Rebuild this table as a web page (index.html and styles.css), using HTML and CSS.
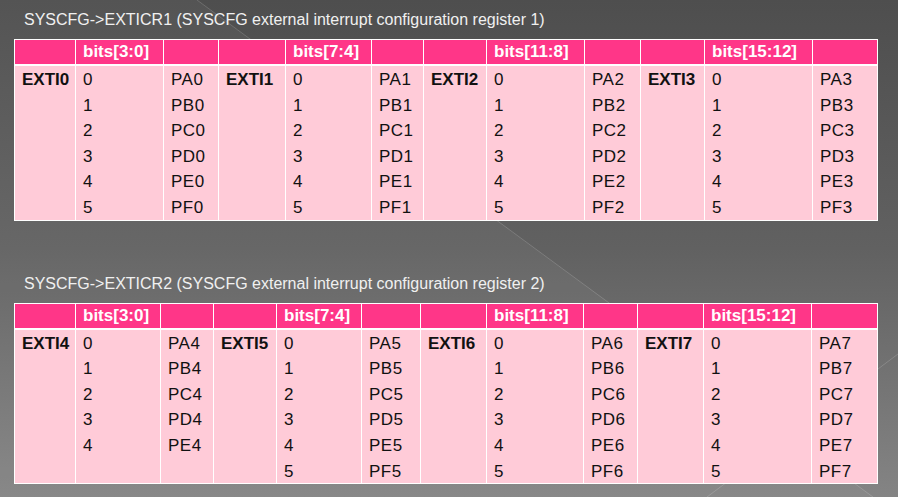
FILE: index.html
```html
<!DOCTYPE html>
<html lang="en">
<head>
<meta charset="utf-8">
<title>SYSCFG EXTICR registers</title>
<link rel="stylesheet" href="styles.css">
</head>
<body>
<div class="slide">
  <svg class="bg" width="898" height="497" viewBox="0 0 898 497" aria-hidden="true">
    <polygon points="0,0 197,0 873,497 0,497" fill="#ffffff" fill-opacity="0.04"/>
    <line x1="197" y1="0" x2="873" y2="497" stroke="#ffffff" stroke-opacity="0.16" stroke-width="1"/>
    <line x1="707" y1="497" x2="898" y2="354" stroke="#ffffff" stroke-opacity="0.16" stroke-width="1"/>
  </svg>

  <section class="block">
    <p class="title">SYSCFG-&gt;EXTICR1 (SYSCFG external interrupt configuration register 1)</p>
    <div class="reg reg1">
      <div class="h first"></div><div class="h">bits[3:0]</div><div class="h"></div>
      <div class="h"></div><div class="h">bits[7:4]</div><div class="h"></div>
      <div class="h"></div><div class="h">bits[11:8]</div><div class="h"></div>
      <div class="h"></div><div class="h">bits[15:12]</div><div class="h"></div>

      <div class="c first ext">EXTI0</div>
      <div class="c">0<br>1<br>2<br>3<br>4<br>5</div>
      <div class="c">PA0<br>PB0<br>PC0<br>PD0<br>PE0<br>PF0</div>
      <div class="c ext">EXTI1</div>
      <div class="c">0<br>1<br>2<br>3<br>4<br>5</div>
      <div class="c">PA1<br>PB1<br>PC1<br>PD1<br>PE1<br>PF1</div>
      <div class="c ext">EXTI2</div>
      <div class="c">0<br>1<br>2<br>3<br>4<br>5</div>
      <div class="c">PA2<br>PB2<br>PC2<br>PD2<br>PE2<br>PF2</div>
      <div class="c ext">EXTI3</div>
      <div class="c">0<br>1<br>2<br>3<br>4<br>5</div>
      <div class="c">PA3<br>PB3<br>PC3<br>PD3<br>PE3<br>PF3</div>
    </div>
  </section>

  <section class="block">
    <p class="title">SYSCFG-&gt;EXTICR2 (SYSCFG external interrupt configuration register 2)</p>
    <div class="reg reg2">
      <div class="h first"></div><div class="h">bits[3:0]</div><div class="h"></div>
      <div class="h"></div><div class="h">bits[7:4]</div><div class="h"></div>
      <div class="h"></div><div class="h">bits[11:8]</div><div class="h"></div>
      <div class="h"></div><div class="h">bits[15:12]</div><div class="h"></div>

      <div class="c first ext">EXTI4</div>
      <div class="c">0<br>1<br>2<br>3<br>4</div>
      <div class="c">PA4<br>PB4<br>PC4<br>PD4<br>PE4</div>
      <div class="c ext">EXTI5</div>
      <div class="c">0<br>1<br>2<br>3<br>4<br>5</div>
      <div class="c">PA5<br>PB5<br>PC5<br>PD5<br>PE5<br>PF5</div>
      <div class="c ext">EXTI6</div>
      <div class="c">0<br>1<br>2<br>3<br>4<br>5</div>
      <div class="c">PA6<br>PB6<br>PC6<br>PD6<br>PE6<br>PF6</div>
      <div class="c ext">EXTI7</div>
      <div class="c">0<br>1<br>2<br>3<br>4<br>5</div>
      <div class="c">PA7<br>PB7<br>PC7<br>PD7<br>PE7<br>PF7</div>
    </div>
  </section>
</div>
</body>
</html>
```

FILE: styles.css
```css
html, body {
  margin: 0;
  padding: 0;
}

body {
  width: 898px;
  height: 497px;
  overflow: hidden;
  background: linear-gradient(180deg, #4e4e4e 0%, #616161 50%, #848484 100%);
  font-family: "Liberation Sans", Arial, sans-serif;
}

.slide {
  position: relative;
  width: 898px;
  height: 497px;
  box-sizing: border-box;
  padding: 10px 20px 0 14px;
}

.bg {
  position: absolute;
  left: 0;
  top: 0;
  z-index: 0;
}

.block {
  position: relative;
  z-index: 1;
}

.block + .block {
  margin-top: 53px;
}

.title {
  margin: 0 0 9px 10px;
  font-size: 16px;
  line-height: 20px;
  color: #f0f0f0;
  white-space: nowrap;
}

.reg {
  display: grid;
  width: 864px;
  box-sizing: border-box;
  border: 1px solid #ffffff;
}

.reg1 {
  grid-template-columns: 60px 88px 55px 67px 86px 52px 63px 98px 56px 64px 108px 65px;
}

.reg2 {
  grid-template-columns: 60px 85px 53px 63px 85px 59px 66px 97px 54px 66px 108px 66px;
}

.h {
  height: 26px;
  box-sizing: border-box;
  background: #ff3688;
  border-left: 1px solid #ffffff;
  border-bottom: 2px solid #ffffff;
  padding-left: 7px;
  color: #ffffff;
  font-weight: bold;
  font-size: 17px;
  line-height: 24px;
  white-space: nowrap;
}

.c {
  height: 153.6px;
  box-sizing: border-box;
  background: #ffcbd8;
  border-left: 1px solid #ffffff;
  padding: 1px 0 0 7px;
  color: #111111;
  font-size: 17px;
  line-height: 25.6px;
  letter-spacing: 0.5px;
  white-space: nowrap;
}

.ext {
  font-weight: bold;
  letter-spacing: 0;
}

.first {
  border-left: 0;
}
```
